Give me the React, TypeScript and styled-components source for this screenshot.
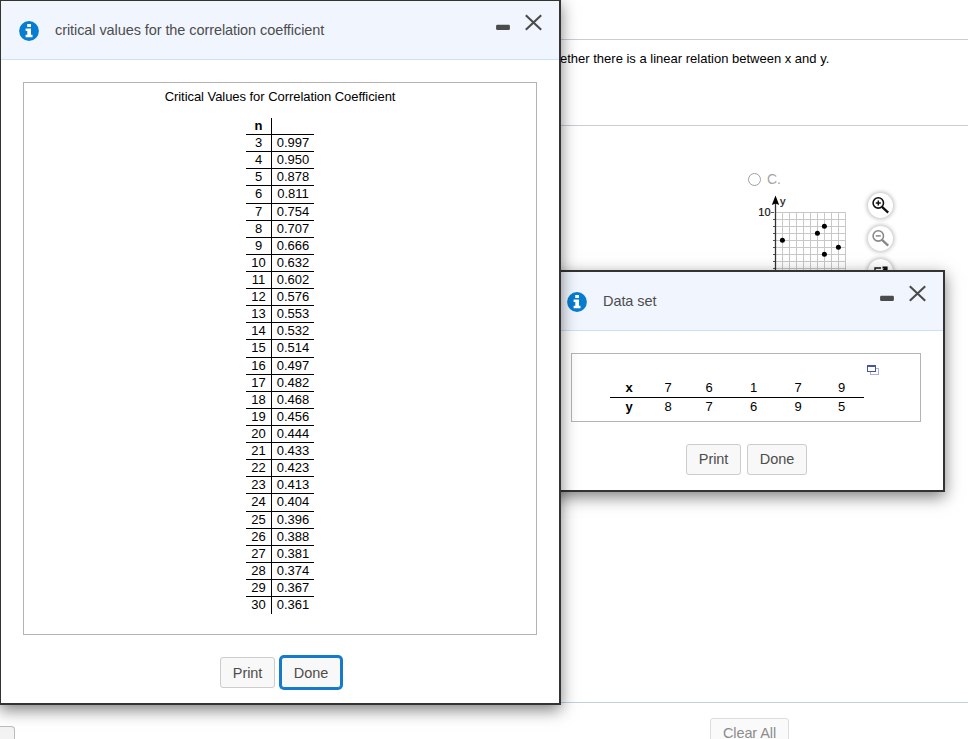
import React from "react";
import styled, { createGlobalStyle } from "styled-components";

const GlobalStyle = createGlobalStyle`
  * { box-sizing: border-box; }
  html, body { margin: 0; height: 739px; overflow: hidden; background: #fff; }
  body { font-family: "Liberation Sans", Arial, sans-serif; font-size: 13px; color: #000; }
`;

const Page = styled.div`
  position: relative;
  display: flex;
  flex-direction: column;
  width: 968px;
  height: 739px;
  overflow: hidden;
`;

const TopBar = styled.header`
  height: 40px;
  border-bottom: 1px solid #c9cdd9;
`;

const Prompt = styled.section`
  height: 86px;
  padding: 11px 0 0 560px;
  line-height: 16px;
  white-space: nowrap;
  border-bottom: 1px solid #c9cdd9;
`;

const Answers = styled.main`
  display: flex;
  height: 577px;
  padding: 45px 0 0 748px;
  border-bottom: 1px solid #c5cfdb;
`;

const Choice = styled.div`
  width: 114px;
`;

const ChoiceLabel = styled.label`
  display: flex;
  align-items: center;
  gap: 6px;
  height: 16px;
  color: #a5a5a5;
  font-size: 14px;
`;

const Radio = styled.span`
  width: 13px;
  height: 13px;
  border: 1px solid #a0a0a0;
  border-radius: 50%;
  background: #fff;
`;

const ChartSvg = styled.svg`
  display: block;
  margin-top: 5px;
  font-family: "Liberation Sans", Arial, sans-serif;
`;

const ZoomTools = styled.div`
  display: flex;
  flex-direction: column;
  gap: 8px;
  padding: 22px 0 0 6px;
`;

const RoundButton = styled.span`
  display: flex;
  align-items: center;
  justify-content: center;
  width: 25px;
  height: 25px;
  border-radius: 50%;
  background: #fff;
  box-shadow: 0 0 4px 1px rgba(0, 0, 0, 0.27);
`;

const BottomBar = styled.footer`
  display: flex;
  align-items: flex-start;
  justify-content: space-between;
  height: 36px;
  padding: 15px 179px 0 0;
`;

const CornerTab = styled.div`
  width: 15px;
  height: 20px;
  margin-top: 8px;
  border: 1px solid #bbb;
  border-width: 1px 1px 0 0;
  border-radius: 0 4px 0 0;
  background: #f3f3f3;
`;

const Button = styled.button<{ $focused?: boolean; $faded?: boolean; $low?: boolean; $width: number }>`
  width: ${(p) => p.$width}px;
  height: 31px;
  padding: ${(p) => (p.$low ? "1px 0 0 1px" : p.$faded ? "0" : "0 0 0 1px")};
  font: 14.5px "Liberation Sans", Arial, sans-serif;
  line-height: ${(p) => (p.$low ? "28px" : "29px")};
  letter-spacing: -0.09px;
  color: ${(p) => (p.$faded ? "#8c8c8c" : "#4d4d4d")};
  background: ${(p) => (p.$faded ? "#fafafa" : "#f8f8f8")};
  border: 1px solid ${(p) => (p.$focused ? "#147ac9" : p.$faded ? "#ddd" : "#ccc")};
  border-radius: 3px;
  box-shadow: ${(p) => (p.$focused ? "0 0 0 2px #147ac9" : "none")};
`;

const Window = styled.section<{ $x: number; $y: number; $w: number; $h: number }>`
  position: absolute;
  left: ${(p) => p.$x}px;
  top: ${(p) => p.$y}px;
  width: ${(p) => p.$w}px;
  height: ${(p) => p.$h}px;
  display: flex;
  flex-direction: column;
  align-items: stretch;
  background: #fff;
  border: 2px solid #333;
  box-shadow: 0 5px 15px rgba(0, 0, 0, 0.5);
`;

const TitleBar = styled.header`
  display: flex;
  flex: none;
  height: 59px;
  padding: 0 16px 0 18px;
  background: #f1f6fe;
  border-bottom: 1px solid #c8e2f7;
`;

const InfoSvg = styled.svg`
  flex: none;
  margin-top: 20px;
`;

const Title = styled.h1`
  flex: 1;
  margin: 0 0 0 16px;
  font-size: 14.5px;
  font-weight: normal;
  line-height: 58px;
  letter-spacing: -0.08px;
  color: #4d4d4d;
  white-space: nowrap;
`;

const Body = styled.div`
  flex: none;
  margin: 22px 22px 0;
  border: 1px solid #b4b4b4;
`;

const CriticalBody = styled(Body)`
  display: flex;
  flex-direction: column;
  align-items: center;
  height: 553px;
`;

const DataBody = styled(Body)`
  display: flex;
  align-items: flex-start;
  height: 69px;
  padding-left: 38px;
`;

const Caption = styled.div`
  margin-top: 5px;
  line-height: 18px;
  letter-spacing: -0.05px;
  white-space: nowrap;
`;

const CriticalTable = styled.div`
  width: 68px;
  margin-top: 12px;
`;

const CriticalRow = styled.div`
  display: grid;
  grid-template-columns: 26px 42px;
  height: 17.11px;
  line-height: 15px;
  text-align: center;
  border-bottom: 1px solid #000;
  &:last-child { border-bottom: 0; }
`;

const CriticalCell = styled.span<{ $divider?: boolean; $bold?: boolean }>`
  height: 17.2px;
  font-weight: ${(p) => (p.$bold ? "bold" : "normal")};
  border-right: ${(p) => (p.$divider ? "1px solid #000" : "0")};
`;

const DataTable = styled.div`
  margin-top: 24px;
`;

const DataRow = styled.div<{ $ruled?: boolean }>`
  display: grid;
  grid-template-columns: 38px 40px 42px 47px 42px 45px;
  height: 20px;
  line-height: ${(p) => (p.$ruled ? "19px" : "17px")};
  text-align: center;
  border-bottom: ${(p) => (p.$ruled ? "1px solid #000" : "0")};
`;

const Actions = styled.footer`
  display: flex;
  justify-content: center;
  gap: 6px;
  padding-top: 22px;
`;

const CopySvg = styled.svg`
  margin: 11px 0 0 3px;
`;

const InfoIcon = () => (
  <InfoSvg width="20" height="20" viewBox="0 0 20 20">
    <circle cx="10" cy="10" r="9.9" fill="#077dd2" />
    <path d="M8.2 3h3.8v3.1H8.2zM6.6 7.5h5.4v6.3h1.5v2.4H6.6v-2.4h1.7V9.9H6.6z" fill="#fff" />
  </InfoSvg>
);

const WindowControls = () => (
  <svg width="47" height="32" viewBox="0 0 47 32">
    <rect x="0.1" y="23.8" width="13.8" height="5.2" rx="1.3" fill="#4b4b4b" />
    <path d="M29.8 14.2L45.2 28.7M45.2 14.2L29.8 28.7" stroke="#4b4b4b" strokeWidth="2.1" fill="none" />
  </svg>
);

const Magnifier = ({ sign, color }: { sign: "plus" | "minus"; color: string }) => (
  <svg width="19" height="19" viewBox="0 0 19 19" fill="none" stroke={color}>
    <circle cx="7.3" cy="6.9" r="5.2" strokeWidth="1.6" />
    <path d="M11 10.8l6.2 5.8" strokeWidth="2.3" />
    <path d={sign === "plus" ? "M4.8 6.9h5M7.3 4.4v5" : "M4.8 6.9h5"} strokeWidth="1.5" />
  </svg>
);

const PopOut = () => (
  <svg width="19" height="19" viewBox="0 0 19 19" fill="none" stroke="#111">
    <path d="M10 6H4v10h10v-4" strokeWidth="1.4" />
    <path d="M11.5 5.5h4V10M15 6l-6 6" strokeWidth="2.2" />
  </svg>
);

const points = [
  [1, 6],
  [6, 7],
  [7, 8],
  [9, 5],
  [7, 4],
];

const Chart = () => {
  const left = 27.5;
  const top = 20.5;
  const steps = Array.from({ length: 11 }, (_, i) => i);
  return (
    <ChartSvg width="114" height="104" viewBox="0 0 114 104">
      {steps.map((i) => (
        <path
          key={i}
          d={`M${left + i * 7} ${top}v70M${left} ${top + i * 7}h70`}
          stroke="#c8c8c8"
          fill="none"
        />
      ))}
      {steps.map((i) => (
        <path key={i} d={`M${i ? 25 : 23} ${top + i * 7}h3`} stroke="#555" fill="none" />
      ))}
      <path d="M27.5 10v81M27.5 90.5h72" stroke="#333" strokeWidth="1.3" fill="none" />
      <path d="M27.5 3.5l3.7 9.5-3.7-1.4-3.7 1.4z" fill="#000" />
      <text x="32" y="13" fontSize="11" fill="#111" stroke="#111" strokeWidth="0.2">y</text>
      <text x="10.3" y="24.3" fontSize="11" fill="#111" stroke="#111" strokeWidth="0.2">10</text>
      <text x="101.5" y="83.5" fontSize="10.5" fill="#222">x</text>
      {points.map(([x, y]) => (
        <circle key={`${x}-${y}`} cx={left - 0.1 + x * 7} cy={top - 0.2 + (10 - y) * 7} r="2.5" fill="#000" />
      ))}
    </ChartSvg>
  );
};

const CopyIcon = () => (
  <CopySvg width="12" height="10" viewBox="0 0 12 10">
    <rect x="3.5" y="3.5" width="8" height="6" fill="#fff" stroke="#aab0dc" />
    <rect x="0.5" y="0.5" width="8" height="6" fill="#fff" stroke="#4455a5" />
    <path d="M0 1h9" stroke="#4455a5" strokeWidth="2" />
  </CopySvg>
);

const criticalValues = [
  "0.997", "0.950", "0.878", "0.811", "0.754", "0.707", "0.666", "0.632", "0.602", "0.576",
  "0.553", "0.532", "0.514", "0.497", "0.482", "0.468", "0.456", "0.444", "0.433", "0.423",
  "0.413", "0.404", "0.396", "0.388", "0.381", "0.374", "0.367", "0.361",
];

const xs = [7, 6, 1, 7, 9];
const ys = [8, 7, 6, 9, 5];

export default function App() {
  return (
    <>
      <GlobalStyle />
      <Page>
        <TopBar />
        <Prompt>ether there is a linear relation between x and y.</Prompt>
        <Answers>
          <Choice>
            <ChoiceLabel>
              <Radio />
              C.
            </ChoiceLabel>
            <Chart />
          </Choice>
          <ZoomTools>
            <RoundButton><Magnifier sign="plus" color="#111" /></RoundButton>
            <RoundButton><Magnifier sign="minus" color="#888" /></RoundButton>
            <RoundButton><PopOut /></RoundButton>
          </ZoomTools>
        </Answers>
        <BottomBar>
          <CornerTab />
          <Button $width={79} $faded>Clear All</Button>
        </BottomBar>

        <Window $x={547} $y={270} $w={398} $h={222}>
          <TitleBar>
            <InfoIcon />
            <Title>Data set</Title>
            <WindowControls />
          </TitleBar>
          <DataBody>
            <DataTable>
              <DataRow $ruled>
                <b>x</b>
                {xs.map((v, i) => <span key={i}>{v}</span>)}
              </DataRow>
              <DataRow>
                <b>y</b>
                {ys.map((v, i) => <span key={i}>{v}</span>)}
              </DataRow>
            </DataTable>
            <CopyIcon />
          </DataBody>
          <Actions>
            <Button $width={55}>Print</Button>
            <Button $width={60}>Done</Button>
          </Actions>
        </Window>

        <Window $x={-1} $y={-1} $w={562} $h={706}>
          <TitleBar>
            <InfoIcon />
            <Title>critical values for the correlation coefficient</Title>
            <WindowControls />
          </TitleBar>
          <CriticalBody>
            <Caption>Critical Values for Correlation Coefficient</Caption>
            <CriticalTable>
              <CriticalRow>
                <CriticalCell $divider $bold>n</CriticalCell>
                <CriticalCell />
              </CriticalRow>
              {criticalValues.map((value, i) => (
                <CriticalRow key={value}>
                  <CriticalCell $divider>{i + 3}</CriticalCell>
                  <CriticalCell>{value}</CriticalCell>
                </CriticalRow>
              ))}
            </CriticalTable>
          </CriticalBody>
          <Actions>
            <Button $width={55} $low>Print</Button>
            <Button $width={60} $low $focused>Done</Button>
          </Actions>
        </Window>
      </Page>
    </>
  );
}
